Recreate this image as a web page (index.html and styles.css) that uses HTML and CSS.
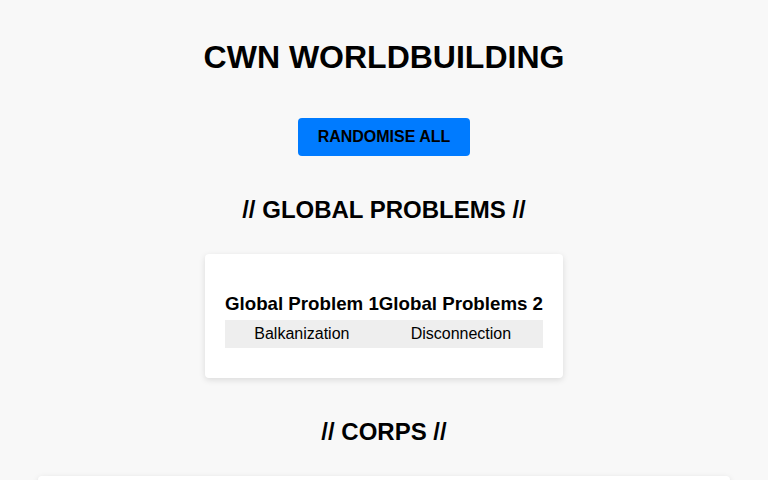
FILE: index.html
```html
<!DOCTYPE html>
<html lang="en">
<head>
    <meta charset="UTF-8">
    <meta name="viewport" content="width=device-width, initial-scale=1.0">
    <title>CWN Worldbuilding</title>
    <link rel="stylesheet" href="styles.css">
</head>
<body>
    <h1>CWN WORLDBUILDING</h1>

    <div class="actions">
        <button id="randomiseAll" type="button">RANDOMISE ALL</button>
    </div>

    <h2>// GLOBAL PROBLEMS //</h2>
    <section class="card card-fit">
        <table class="roll-table">
            <tr>
                <th>Global Problem 1</th>
                <th>Global Problems 2</th>
            </tr>
            <tr>
                <td>Balkanization</td>
                <td>Disconnection</td>
            </tr>
        </table>
    </section>

    <h2>// CORPS //</h2>
    <section class="card card-wide">
        <table class="roll-table">
            <tr>
                <th>Corp Type</th>
                <th>Corp Trait</th>
            </tr>
            <tr>
                <td>Arcology</td>
                <td>Ruthless</td>
            </tr>
        </table>
    </section>
</body>
</html>
```

FILE: styles.css
```css
body {
    font-family: 'Liberation Sans', Arial, sans-serif;
    background-color: #f8f8f8;
    color: #000;
    margin: 0;
    padding: 18px 20px;
    text-align: center;
}

h1 {
    font-size: 32px;
    margin: 21px 0 42px;
}

.actions {
    margin-bottom: 40px;
}

button {
    font-family: inherit;
    font-size: 16px;
    font-weight: bold;
    color: #000;
    background-color: #007bff;
    border: none;
    border-radius: 4px;
    padding: 10px 20px;
    cursor: pointer;
}

h2 {
    font-size: 24px;
    margin: 20px 0;
}

.card {
    background-color: #fff;
    border-radius: 4px;
    box-shadow: 0 2px 6px rgba(0, 0, 0, 0.12);
    padding: 20px 20px 30px;
    margin: 30px auto 40px;
    box-sizing: border-box;
}

.card-fit {
    display: table;
}

.card-wide {
    width: 90vw;
}

.roll-table {
    border-collapse: collapse;
    margin: 0 auto;
}

.roll-table th {
    font-size: 18.72px;
    padding: 18.72px 0 5px;
}

.roll-table td {
    font-size: 16px;
    background-color: #eee;
    padding: 5px 0;
}
```
